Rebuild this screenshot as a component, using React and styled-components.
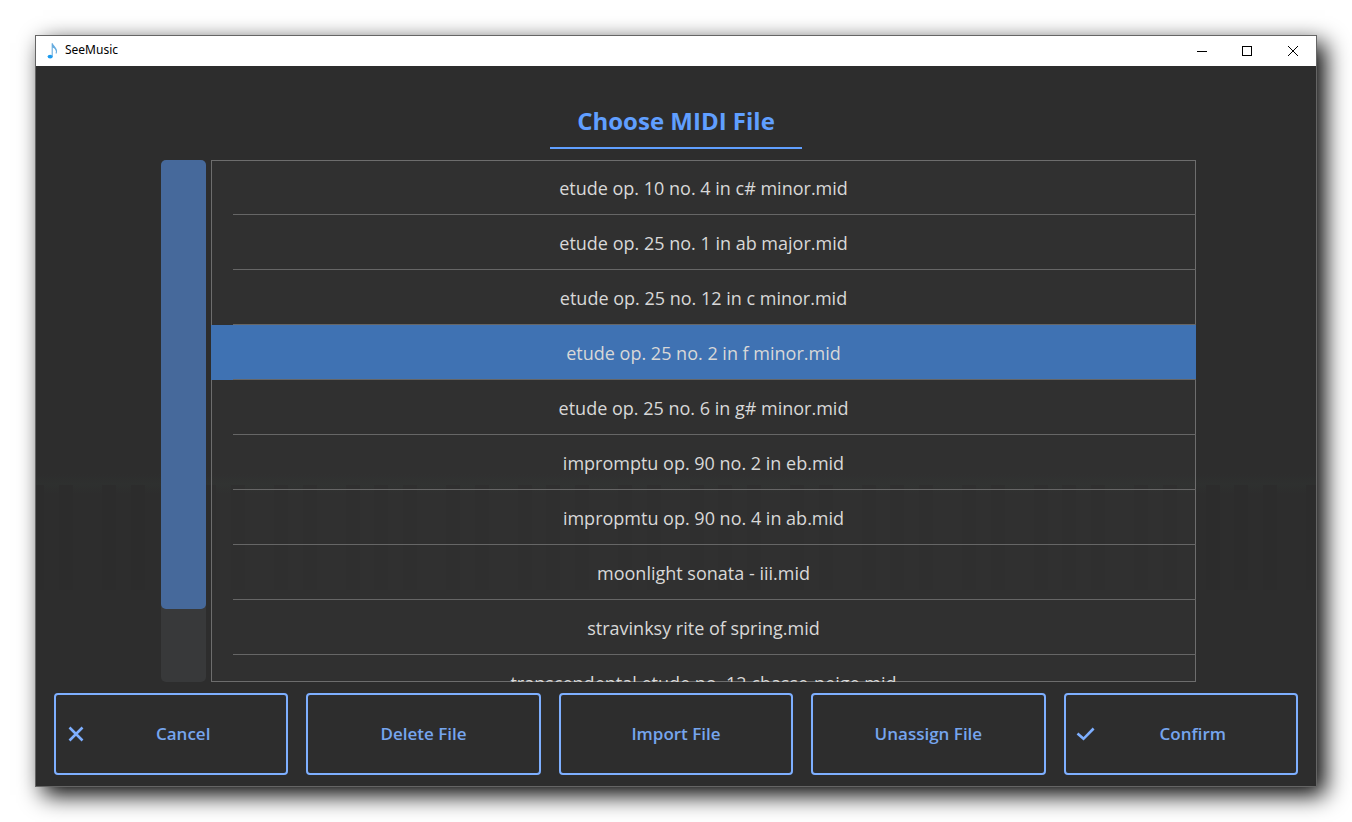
import React, { useState } from "react";
import styled, { createGlobalStyle } from "styled-components";

const files = [
  "etude op. 10 no. 4 in c# minor.mid",
  "etude op. 25 no. 1 in ab major.mid",
  "etude op. 25 no. 12 in c minor.mid",
  "etude op. 25 no. 2 in f minor.mid",
  "etude op. 25 no. 6 in g# minor.mid",
  "impromptu op. 90 no. 2 in eb.mid",
  "impropmtu op. 90 no. 4 in ab.mid",
  "moonlight sonata - iii.mid",
  "stravinksy rite of spring.mid",
  "transcendental etude no. 12 chasse-neige.mid",
];

const actions = [
  { label: "Cancel", icon: "cross" },
  { label: "Delete File" },
  { label: "Import File" },
  { label: "Unassign File" },
  { label: "Confirm", icon: "check" },
];

const iconPaths = {
  cross: "M5.5 5.5L18.5 18.5M18.5 5.5L5.5 18.5",
  check: "M3.5 11.5L9.5 16.8L19.6 6.5",
};

function App() {
  const [selected, setSelected] = useState(3);

  return (
    <>
      <GlobalStyle />
      <Desktop>
        <Window>
          <TitleBar>
            <NoteIcon viewBox="0 0 16 18" aria-hidden="true">
              <ellipse cx="4.2" cy="14.6" rx="2.6" ry="1.9" fill="#1a9bf0" />
              <path
                d="M6.2 14.4V1.2C6.6 4.6 12.6 6 10 11.4"
                fill="none"
                stroke="#6aaee0"
                strokeWidth="1.1"
              />
              <path d="M6.2 1.2C6.8 4.8 11.6 6 10.2 10.4C10 7.4 8.2 6 6.2 5.4Z" fill="#62a9de" />
            </NoteIcon>
            <AppName>SeeMusic</AppName>
            <Caption aria-label="Minimize">
              <svg width="12" height="12" viewBox="0 0 12 12">
                <path d="M2 6.5H12" />
              </svg>
            </Caption>
            <Caption aria-label="Maximize">
              <svg width="12" height="12" viewBox="0 0 12 12">
                <rect x="1.5" y="1.5" width="9" height="9" />
              </svg>
            </Caption>
            <Caption aria-label="Close">
              <svg width="12" height="12" viewBox="0 0 12 12">
                <path d="M1 1L11 11M11 1L1 11" />
              </svg>
            </Caption>
          </TitleBar>

          <Body>
            <Heading>Choose MIDI File</Heading>
            <Picker>
              <Track>
                <Thumb />
              </Track>
              <FileList>
                {files.map((name, i) => (
                  <li key={name}>
                    <FileRow
                      $active={i === selected}
                      aria-pressed={i === selected}
                      onClick={() => setSelected(i)}
                    >
                      {name}
                    </FileRow>
                  </li>
                ))}
              </FileList>
            </Picker>
            <Actions>
              {actions.map((action) => (
                <ActionButton key={action.label}>
                  {action.icon && (
                    <svg width="24" height="24" viewBox="0 0 24 24" aria-hidden="true">
                      <path d={iconPaths[action.icon]} />
                    </svg>
                  )}
                  <Label>{action.label}</Label>
                </ActionButton>
              ))}
            </Actions>
          </Body>
        </Window>
      </Desktop>
    </>
  );
}

const GlobalStyle = createGlobalStyle`
  * {
    box-sizing: border-box;
  }
  body {
    margin: 0;
    background: #ffffff;
    font-family: "Open Sans", "Noto Sans", sans-serif;
  }
  button {
    font-family: inherit;
    cursor: pointer;
  }
`;

const Desktop = styled.div`
  display: flex;
  height: 100vh;
  padding: 35px;
  overflow: hidden;
`;

const Window = styled.main`
  display: flex;
  flex-direction: column;
  flex: 1;
  min-width: 0;
  border: 1px solid #656565;
  box-shadow: 8px 8px 22px #000000;
`;

const TitleBar = styled.header`
  display: flex;
  align-items: center;
  height: 30px;
  flex-shrink: 0;
  padding-left: 10px;
  background: #ffffff;
`;

const NoteIcon = styled.svg`
  width: 16px;
  height: 18px;
`;

const AppName = styled.span`
  flex: 1;
  margin-left: 3px;
  padding-bottom: 2px;
  font-family: "Noto Sans", sans-serif;
  font-size: 12px;
  line-height: 16px;
  color: #000000;
`;

const Caption = styled.button`
  display: flex;
  align-items: center;
  justify-content: center;
  width: 46px;
  height: 30px;
  padding: 0;
  border: none;
  background: none;

  svg {
    fill: none;
    stroke: #000000;
    stroke-width: 1;
  }
`;

/* the piano keyboard shows very faintly through the dark overlay */
const Body = styled.div`
  display: flex;
  flex-direction: column;
  align-items: center;
  flex: 1;
  min-height: 0;
  padding: 34px 18px 11px;
  background-color: #2d2d2d;
  background-image: linear-gradient(
      90deg,
      transparent 10%,
      #2c2c2c 10% 18%,
      transparent 18% 27%,
      #2c2c2c 27% 35%,
      transparent 35% 52%,
      #2c2c2c 52% 60%,
      transparent 60% 68%,
      #2c2c2c 68% 76%,
      transparent 76% 85%,
      #2c2c2c 85% 93%,
      transparent 93%
    ),
    linear-gradient(transparent, #2e302f, transparent);
  background-size: 172px 105px, 100% 20px;
  background-position: 49px 419px, 0 408px;
  background-repeat: repeat-x, no-repeat;
`;

const Heading = styled.h1`
  width: 252px;
  margin: 0 0 11px;
  padding: 1px 0 6px;
  border-bottom: 2px solid #609fff;
  font-size: 24px;
  font-weight: 700;
  line-height: 40px;
  text-align: center;
  color: #609fff;
`;

const Picker = styled.div`
  display: flex;
  align-self: stretch;
  flex: 1;
  min-height: 0;
  gap: 5px;
  margin: 0 102px 11px 107px;
`;

const Track = styled.div`
  width: 45px;
  border-radius: 5px;
  background: #38393a;
`;

const Thumb = styled.div`
  height: 86%;
  border-radius: 5px;
  background: #46699b;
`;

const FileList = styled.ul`
  flex: 1;
  min-width: 0;
  margin: 0;
  padding: 0;
  overflow: hidden;
  list-style: none;
  background: rgba(255, 255, 255, 0.015);
  box-shadow: inset 0 0 0 1px #6d6d6d;
`;

const FileRow = styled.button`
  display: block;
  width: 100%;
  height: 55px;
  padding: 0;
  border: none;
  background: linear-gradient(#666666, #666666) 22px 100% / 100% 1px no-repeat
    ${(props) => (props.$active ? "#3f72b3" : "transparent")};
  font-size: 18px;
  line-height: 24px;
  text-align: center;
  color: #d8d8d8;
`;

const Actions = styled.div`
  display: grid;
  grid-template-columns: repeat(5, 1fr);
  align-self: stretch;
  gap: 18px;
`;

const ActionButton = styled.button`
  display: flex;
  align-items: center;
  height: 82px;
  padding: 0 8px;
  border: 2px solid #7eafff;
  border-radius: 4px;
  background: #2d2d2d;
  color: #76a5ee;

  svg {
    fill: none;
    stroke: #7eafff;
    stroke-width: 2.6;
  }
`;

const Label = styled.span`
  flex: 1;
  font-size: 17px;
  font-weight: 600;
  line-height: 24px;
  text-align: center;
`;

export default App;
